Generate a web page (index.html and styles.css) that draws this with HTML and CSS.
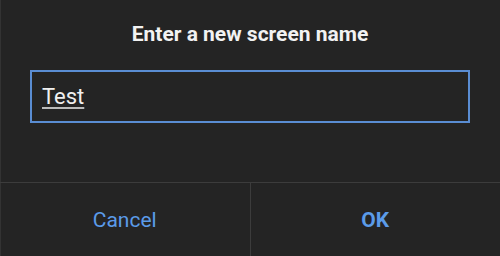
FILE: index.html
```html
<!DOCTYPE html>
<html>
<head>
<meta charset="utf-8">
<link rel="stylesheet" href="styles.css">
</head>
<body>
<div class="dialog">
  <div class="content">
    <div class="title">Enter a new screen name</div>
    <div class="field"><span class="value">Test</span></div>
  </div>
  <div class="actions">
    <div class="btn">Cancel</div>
    <div class="btn primary">OK</div>
  </div>
</div>
</body>
</html>
```
FILE: styles.css
```css
html, body {
  margin: 0;
  padding: 0;
  background: #242424;
}
.dialog {
  width: 500px;
  height: 256px;
  box-sizing: border-box;
  border-left: 1px solid #333;
  background: #242424;
  font-family: Roboto, "Noto Sans", sans-serif;
  display: flex;
  flex-direction: column;
}
.content {
  flex: 1;
  padding: 22px 30px 0 29px;
}
.title {
  color: #f2f2f2;
  font-weight: 700;
  font-size: 21px;
  line-height: 24px;
  text-align: center;
}
.field {
  margin-top: 24px;
  height: 53px;
  box-sizing: border-box;
  border: 2px solid #5a8dd3;
  padding: 1px 10px 0 10px;
  line-height: 48px;
  font-size: 22px;
  color: #f0f0f0;
}
.value {
  text-decoration: underline;
  text-decoration-color: #bbb;
  text-underline-offset: 3px;
}
.actions {
  height: 74px;
  box-sizing: border-box;
  border-top: 1px solid #3c3c3c;
  display: flex;
  margin-left: -1px;
}
.btn {
  flex: 1;
  text-align: center;
  color: #5b9be9;
  font-size: 21px;
  line-height: 71px;
  padding-top: 2px;
  box-sizing: border-box;
}
.btn + .btn {
  border-left: 1px solid #3c3c3c;
}
.primary {
  font-weight: 700;
}
```
